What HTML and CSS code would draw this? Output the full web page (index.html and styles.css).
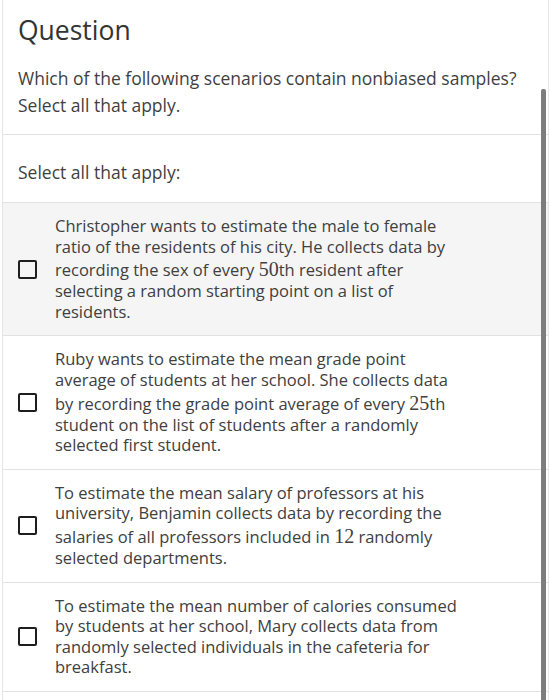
FILE: index.html
```html
<!DOCTYPE html>
<html lang="en">
<head>
<meta charset="utf-8">
<title>Question</title>
<link rel="stylesheet" href="styles.css">
</head>
<body>
<div class="page">
  <section class="header">
    <h1 class="title">Question</h1>
    <p class="prompt">Which of the following scenarios contain nonbiased samples? Select all that apply.</p>
  </section>
  <section class="instr">Select all that apply:</section>
  <ul class="options">
    <li class="option shaded">
      <span class="box"></span>
      <span class="text">Christopher wants to estimate the male to female ratio of the residents of his city. He collects data by recording the sex of every <span class="math">50</span>th resident after selecting a random starting point on a list of residents.</span>
    </li>
    <li class="option">
      <span class="box"></span>
      <span class="text">Ruby wants to estimate the mean grade point average of students at her school. She collects data by recording the grade point average of every <span class="math">25</span>th student on the list of students after a randomly selected first student.</span>
    </li>
    <li class="option">
      <span class="box"></span>
      <span class="text">To estimate the mean salary of professors at his university, Benjamin collects data by recording the salaries of all professors included in <span class="math">12</span> randomly selected departments.</span>
    </li>
    <li class="option">
      <span class="box"></span>
      <span class="text">To estimate the mean number of calories consumed by students at her school, Mary collects data from randomly selected individuals in the cafeteria for breakfast.</span>
    </li>
  </ul>
  <div class="scrollbar"></div>
</div>
</body>
</html>
```

FILE: styles.css
```css
* { box-sizing: border-box; }
html, body { margin: 0; padding: 0; background: #fff; }
body {
  font-family: "Open Sans", "Liberation Sans", sans-serif;
  color: #3f3f3f;
  width: 550px;
  height: 700px;
  overflow: hidden;
}
.page {
  position: relative;
  margin-left: 2px;
  width: 547px;
  min-height: 700px;
  border-left: 1px solid #e6e6e6;
  border-right: 1px solid #e6e6e6;
}
.header {
  padding: 13px 0 0 15px;
  height: 135px;
  border-bottom: 1px solid #e2e2e2;
}
.title {
  margin: 0;
  font-size: 26.5px;
  line-height: 34px;
  font-weight: 400;
  color: #333;
}
.prompt {
  margin: 18px 0 0;
  font-size: 17.5px;
  line-height: 27px;
  color: #3f3f3f;
  width: 515px;
}
.instr {
  height: 68px;
  padding: 6px 15px 0;
  display: flex;
  align-items: center;
  font-size: 17.5px;
  border-bottom: 1px solid #e2e2e2;
}
.options { list-style: none; margin: 0; padding: 0; }
.option {
  display: flex;
  align-items: center;
  padding: 13px 0;
  border-bottom: 1px solid #e2e2e2;
}
.option.shaded { background: #f5f5f5; }
.box {
  flex: none;
  width: 19px;
  height: 19px;
  margin: 0 18px 0 15px;
  border: 2.5px solid #1e1e1e;
  border-radius: 2px;
  background: #fff;
}
.option.shaded .box { background: transparent; }
.text {
  font-size: 16.5px;
  line-height: 20.6px;
  width: 414px;
  color: #404040;
}
.math {
  font-family: "Liberation Serif", "DejaVu Serif", serif;
  font-size: 20px;
  display: inline-block;
  line-height: 24px;
}
.scrollbar {
  position: absolute;
  right: 2px;
  top: 89px;
  width: 5px;
  height: 620px;
  background: #7d7d7d;
  border-radius: 2px 2px 0 0;
}
```
